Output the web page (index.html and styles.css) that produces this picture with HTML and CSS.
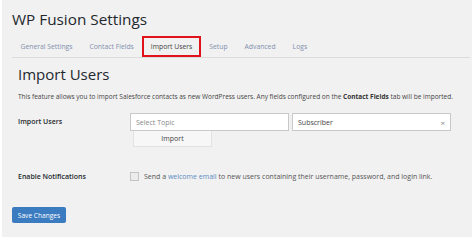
FILE: index.html
```html
<!DOCTYPE html>
<html>
<head>
<meta charset="utf-8">
<link rel="stylesheet" href="styles.css">
</head>
<body>
<div class="page">
  <h1 class="title">WP Fusion Settings</h1>
  <nav class="tabs">
    <span class="tab">General Settings</span>
    <span class="tab">Contact Fields</span>
    <span class="tab active">Import Users</span>
    <span class="tab">Setup</span>
    <span class="tab">Advanced</span>
    <span class="tab">Logs</span>
  </nav>
  <section class="panel">
    <h2 class="heading">Import Users</h2>
    <p class="desc">This feature allows you to import Salesforce contacts as new WordPress users. Any fields configured on the <b>Contact Fields</b> tab will be imported.</p>
    <div class="row row-import">
      <div class="label">Import Users</div>
      <div class="field">
        <div class="inputs">
          <div class="input placeholder">Select Topic</div>
          <div class="input value"><span>Subscriber</span><span class="x">×</span></div>
        </div>
        <div class="btn-import">Import</div>
      </div>
    </div>
    <div class="row row-notify">
      <div class="label">Enable Notifications</div>
      <div class="field check">
        <span class="box"></span>
        <span>Send a <span class="link">welcome email</span> to new users containing their username, password, and login link.</span>
      </div>
    </div>
  </section>
  <div class="save">Save Changes</div>
</div>
</body>
</html>
```
FILE: styles.css
```css
html, body { margin: 0; padding: 0; }
body {
  width: 474px; height: 241px; overflow: hidden;
  background: #fff;
  font-family: "Open Sans", "Noto Sans", sans-serif;
  color: #444;
}
.page {
  width: 470px; height: 237px;
  margin-left: 2px;
  background: #f1f1f1;
  padding: 0 0 0 10px;
  box-sizing: border-box;
}
.title {
  margin: 0;
  padding-top: 8px;
  font-family: "Open Sans", sans-serif;
  font-weight: 400;
  font-size: 15.3px;
  line-height: 22px;
  color: #23282d;
}
.tabs {
  display: flex;
  margin-top: 6px;
  height: 21px;
  border-bottom: 1px solid #dcdcdc;
  margin-right: 2px;
  align-items: stretch;
  font-size: 6.8px;
  color: #8190ad;
}
.tab {
  display: flex; align-items: center;
  padding: 0 8.5px;
}
.tab.active {
  color: #444;
  border: 2px solid #e0131a;
  padding: 0 6.5px;
}
.panel { padding-left: 6px; }
.heading {
  margin: 0; padding-top: 6px;
  font-weight: 400; font-size: 15px; line-height: 20px;
  color: #23282d;
}
.desc {
  margin: 8px 0 0;
  font-size: 6.5px;
  color: #444;
  line-height: 10px;
}
.desc b { font-weight: 700; color: #333; }
.row { display: flex; }
.label {
  width: 112px;
  font-size: 7px;
  font-weight: 600;
  color: #23282d;
}
.row-import { margin-top: 11px; }
.row-import .label { padding-top: 4px; }
.inputs { display: flex; gap: 3px; }
.input {
  width: 159px; height: 18px; box-sizing: border-box;
  background: #fff; border: 1px solid #c9c9c9;
  font-size: 7px; display: flex; align-items: center; padding: 0 5px;
}
.placeholder { color: #8a8a8a; }
.value { justify-content: space-between; color: #444; }
.x { color: #888; font-size: 8px; }
.btn-import {
  margin-left: 3px;
  width: 79px; height: 16px; box-sizing: border-box;
  background: #f7f7f7; border: 1px solid #e2e2e2; border-top: none;
  font-size: 7px; color: #444;
  display: flex; align-items: center; justify-content: center;
}
.row-notify { margin-top: 25px; align-items: center; }
.check { display: flex; align-items: center; font-size: 7px; color: #555; }
.box {
  width: 9px; height: 9px; box-sizing: border-box;
  border: 1px solid #c4c4c4; background: #ececec; margin-right: 5px;
}
.link { color: #5d8ac4; }
.save {
  margin-top: 26px;
  width: 54px; height: 16px;
  background: #3b7bc0; color: #fff;
  font-size: 6.6px; border-radius: 2px;
  display: flex; align-items: center; justify-content: center;
}
```
